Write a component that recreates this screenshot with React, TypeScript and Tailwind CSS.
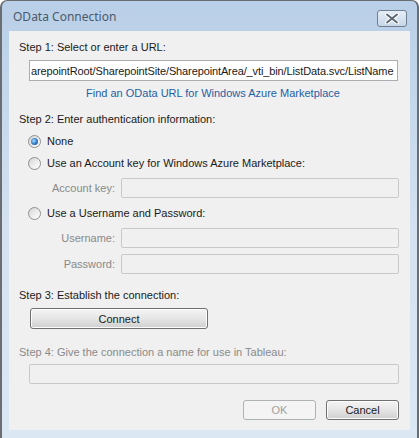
import React from 'react';

const font = { fontFamily: '"Liberation Sans", Arial, sans-serif' };
const titleFont = { fontFamily: '"Noto Sans", "Open Sans", sans-serif' };

const Radio: React.FC<{ checked?: boolean; label: string }> = ({ checked, label }) => (
  <div className="flex items-center h-[16px] pl-[9px]">
    <span className="relative w-[13px] h-[13px] rounded-full border border-[#8f8f8f] bg-gradient-to-br from-[#d4d4d4] via-[#ececec] to-[#ffffff] flex items-center justify-center">
      {checked && (
        <span className="w-[7px] h-[7px] rounded-full bg-[radial-gradient(circle_at_40%_40%,#a8dcff,#2f78c4_55%,#0d3f7a)]" />
      )}
    </span>
    <span className="ml-[6px] text-[#1a1a1a]">{label}</span>
  </div>
);

const FieldRow: React.FC<{ label: string }> = ({ label }) => (
  <div className="flex items-center h-[20px]">
    <span className="w-[96px] text-right text-[#8a8a8a]">{label}</span>
    <span className="ml-[6px] w-[278px] h-[20px] border border-[#c9c9c9] rounded-[2px] bg-[#f0f0f0]" />
  </div>
);

const CloseGlyph = () => (
  <svg width="14" height="11" viewBox="0 0 14 11">
    <path d="M2 1.5 L12 9.5 M12 1.5 L2 9.5" stroke="#ffffff" strokeWidth="4" strokeLinecap="round" />
    <path d="M2 1.5 L12 9.5 M12 1.5 L2 9.5" stroke="#5e6874" strokeWidth="2" strokeLinecap="round" />
  </svg>
);

export default function App() {
  return (
    <div style={font} className="w-[419px] h-[438px] text-[11px] leading-[16px] overflow-hidden">
      <div className="w-full h-full flex flex-col border-l-2 border-r-2 border-t border-[#6a6d72] rounded-t-[7px] bg-gradient-to-b from-[#b9cfe7] via-[#d3e1f0] to-[#dce7f4]">
        {/* title bar */}
        <div className="h-[30px] flex items-center justify-between pl-[11px] pr-[10px] shrink-0">
          <span style={titleFont} className="text-[#4a5a6b] text-[12px] pt-[2px]">OData Connection</span>
          <span className="w-[30px] h-[17px] mt-[4px] rounded-[3px] border border-[#6f7f92] bg-gradient-to-b from-[#e6eef7] to-[#c7d6e7] flex items-center justify-center">
            <CloseGlyph />
          </span>
        </div>

        {/* client area */}
        <div className="mx-[7px] h-[399px] bg-[#f0f0f0] flex flex-col pl-[10px] shrink-0">
          <div className="mt-[8px] text-[#1a1a1a]">Step 1: Select or enter a URL:</div>
          <div className="mt-[5px] ml-[10px] w-[369px] h-[21px] bg-white border border-[#abadb3] flex items-center pl-[1px] overflow-hidden">
            <span className="whitespace-nowrap text-[#1a1a1a] tracking-[-0.12px]">arepointRoot/SharepointSite/SharepointArea/_vti_bin/ListData.svc/ListName</span>
          </div>
          <div className="mt-[4px] w-[388px] text-center text-[#1f5fa6]">Find an OData URL for Windows Azure Marketplace</div>

          <div className="mt-[10px] text-[#1a1a1a]">Step 2: Enter authentication information:</div>
          <div className="mt-[6px]"><Radio checked label="None" /></div>
          <div className="mt-[6px]"><Radio label="Use an Account key for Windows Azure Marketplace:" /></div>
          <div className="mt-[7px]"><FieldRow label="Account key:" /></div>
          <div className="mt-[7px]"><Radio label="Use a Username and Password:" /></div>
          <div className="mt-[7px]"><FieldRow label="Username:" /></div>
          <div className="mt-[6px]"><FieldRow label="Password:" /></div>

          <div className="mt-[13px] text-[#1a1a1a]">Step 3: Establish the connection:</div>
          <div className="mt-[5px] ml-[11px] w-[178px] h-[21px] rounded-[3px] border border-[#707070] bg-gradient-to-b from-[#f4f4f4] via-[#e6e6e6] to-[#cfcfcf] flex items-center justify-center text-[#1a1a1a] shadow-[inset_0_0_0_1px_#fcfcfc]">
            Connect
          </div>

          <div className="mt-[15px] text-[#8a8a8a]">Step 4: Give the connection a name for use in Tableau:</div>
          <div className="mt-[4px] ml-[10px] w-[370px] h-[20px] border border-[#c9c9c9] rounded-[2px] bg-[#f0f0f0]" />

          <div className="mt-[16px] flex justify-end pr-[11px] gap-[10px]">
            <div className="w-[73px] h-[20px] rounded-[3px] border border-[#adb2b5] bg-[#f4f4f4] flex items-center justify-center text-[#a0a0a0]">
              OK
            </div>
            <div className="w-[73px] h-[20px] rounded-[3px] border border-[#707070] bg-gradient-to-b from-[#f4f4f4] via-[#e6e6e6] to-[#cfcfcf] flex items-center justify-center text-[#1a1a1a] shadow-[inset_0_0_0_1px_#fcfcfc]">
              Cancel
            </div>
          </div>
        </div>
      </div>
    </div>
  );
}
